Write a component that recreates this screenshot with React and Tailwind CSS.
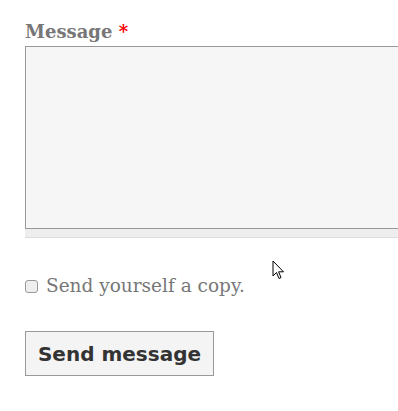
export default function App() {
  return (
    <div className="relative w-[398px] h-[411px] overflow-hidden bg-white">
      <form className="pl-[25px] pt-[20px]">
        <label className="block font-['DejaVu_Serif',serif] font-bold text-[18px] leading-[24px] text-[#777]">
          Message <span className="text-[#f00]">*</span>
        </label>
        <div className="mt-[2px] w-[400px]">
          <textarea
            className="block w-full h-[183px] border border-[#999] bg-[#f6f6f6] resize-none outline-none"
          />
          <div className="h-[9px] bg-[#eee] border-b border-[#ddd]" />
        </div>

        <div className="mt-[36px] flex items-center gap-[8px]">
          <input
            type="checkbox"
            className="w-[13px] h-[13px] appearance-none rounded-[3px] border border-[#999] bg-[#eee]"
          />
          <span className="font-['DejaVu_Serif',serif] text-[18.5px] leading-[24px] text-[#777]">
            Send yourself a copy.
          </span>
        </div>

        <button
          type="button"
          className="mt-[33px] w-[189px] h-[45px] border border-[#999] bg-[#f4f4f4] font-['DejaVu_Sans',sans-serif] font-bold text-[20px] text-[#333]"
        >
          Send message
        </button>
      </form>

      <svg
        className="absolute left-[272px] top-[260px]"
        width="14"
        height="21"
        viewBox="0 0 14 21"
      >
        <path
          d="M1 1 L1 16 L4.5 12.5 L7 18.5 L9 17.6 L6.6 11.8 L11.5 11.8 Z"
          fill="#fff"
          stroke="#000"
          strokeWidth="1"
          strokeLinejoin="miter"
        />
      </svg>
    </div>
  );
}
